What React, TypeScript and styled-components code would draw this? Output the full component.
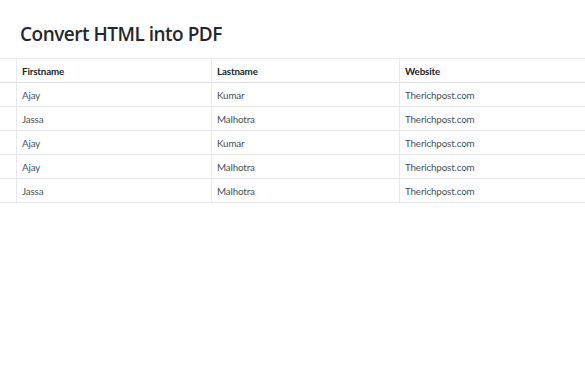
import React from "react";
import styled, { createGlobalStyle } from "styled-components";

interface Person {
  firstname: string;
  lastname: string;
  website: string;
}

const people: Person[] = [
  { firstname: "Ajay", lastname: "Kumar", website: "Therichpost.com" },
  { firstname: "Jassa", lastname: "Malhotra", website: "Therichpost.com" },
  { firstname: "Ajay", lastname: "Kumar", website: "Therichpost.com" },
  { firstname: "Ajay", lastname: "Malhotra", website: "Therichpost.com" },
  { firstname: "Jassa", lastname: "Malhotra", website: "Therichpost.com" },
];

const GlobalStyle = createGlobalStyle`
  body {
    margin: 0;
    background: #ffffff;
    font-family: "Open Sans", "Noto Sans", sans-serif;
    color: #212529;
  }
`;

const Page = styled.div`
  display: flex;
  flex-direction: column;
  padding-top: 21px;
`;

const Title = styled.h1`
  margin: 0 0 11px 20px;
  font-size: 19px;
  font-weight: 600;
  letter-spacing: -0.5px;
  line-height: 26px;
  color: #25282b;
`;

const Table = styled.table`
  width: 100%;
  border-collapse: collapse;
  table-layout: fixed;
  font-family: "Lato", "Open Sans", sans-serif;
  font-size: 9.8px;
  letter-spacing: -0.15px;
`;

const HeadCell = styled.th<{ $w?: number }>`
  width: ${(p) => (p.$w ? `${p.$w - 12}px` : "auto")};
  height: 23px;
  padding: 0 5px;
  text-align: left;
  font-weight: 700;
  color: #212529;
  border-top: 1px solid #eceef1;
  border-bottom: 1px solid #dee2e6;
  border-left: 1px solid #e6e8ec;
  &:first-child {
    border-left: none;
  }
`;

const Cell = styled.td`
  height: 23px;
  padding: 0 5px;
  color: #495057;
  border-bottom: 1px solid #e6e8ec;
  border-left: 1px solid #e6e8ec;
  &:first-child {
    border-left: none;
  }
`;

export default function App() {
  return (
    <>
      <GlobalStyle />
      <Page>
        <Title>Convert HTML into PDF</Title>
        <Table>
          <thead>
            <tr>
              <HeadCell $w={18} />
              <HeadCell $w={196}>Firstname</HeadCell>
              <HeadCell $w={189}>Lastname</HeadCell>
              <HeadCell>Website</HeadCell>
            </tr>
          </thead>
          <tbody>
            {people.map((p, i) => (
              <tr key={i}>
                <Cell />
                <Cell>{p.firstname}</Cell>
                <Cell>{p.lastname}</Cell>
                <Cell>{p.website}</Cell>
              </tr>
            ))}
          </tbody>
        </Table>
      </Page>
    </>
  );
}
